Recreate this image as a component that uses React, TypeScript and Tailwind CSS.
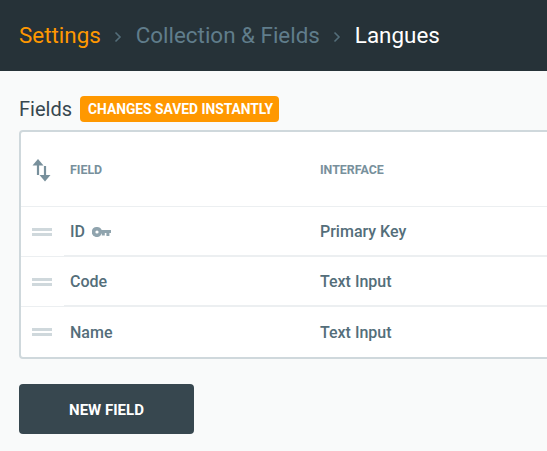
import type { FC } from 'react';

type Row = { name: string; iface: string; primary?: boolean };

const rows: Row[] = [
  { name: 'ID', iface: 'Primary Key', primary: true },
  { name: 'Code', iface: 'Text Input' },
  { name: 'Name', iface: 'Text Input' },
];

const Chevron: FC = () => (
  <svg width="8" height="12" viewBox="0 0 8 12" className="mx-[13.5px] mt-0.5 shrink-0" fill="none">
    <path d="M1.5 1.5 6 6l-4.500 4.500" stroke="#546e7a" strokeWidth="1.6" />
  </svg>
);

const KeyIcon: FC = () => (
  <svg width="19" height="10" viewBox="0 0 19 10" className="ml-[7px]" fill="#90a4ae">
    <path d="M5 0a5 5 0 0 1 4.700 3H19v3h-1.600v3h-3V6h-1.600v2.500h-3V6.500H9.600A5 5 0 1 1 5 0Zm0 3.400a1.600 1.600 0 1 0 0 3.200 1.600 1.600 0 0 0 0-3.200Z" />
  </svg>
);

const SortIcon: FC = () => (
  <svg width="19" height="24" viewBox="0 0 19 24" fill="none" stroke="#78909c" strokeWidth="2.200">
    <path d="M6 3v14" />
    <path d="M13 8v13" />
    <path d="M0.500 7.500 6 1l5.500 6.500Z" strokeWidth="0" fill="#78909c" />
    <path d="M7.500 17 13 23.500l5.500-6.500Z" strokeWidth="0" fill="#78909c" />
  </svg>
);

const Handle: FC = () => (
  <div className="flex w-[20px] flex-col gap-[2px]">
    <div className="h-[3px] bg-[#cfd8dc]" />
    <div className="h-[3px] bg-[#cfd8dc]" />
  </div>
);

export default function App() {
  return (
    <div className="h-[451px] w-[547px] overflow-hidden bg-[#f9fafa] font-['Roboto',sans-serif]">
      <header className="flex h-[71px] items-center bg-[#263238] pl-[19px] text-[22.4px]">
        <span className="text-[#ff9800]">Settings</span>
        <Chevron />
        <span className="text-[#607d8b]">Collection &amp; Fields</span>
        <Chevron />
        <span className="text-white">Langues</span>
      </header>

      <div className="flex items-center pl-[19px] pt-[25px]">
        <span className="text-[20px] leading-[26px] text-[#37474f]">Fields</span>
        <span className="ml-[8px] flex h-[26px] items-center rounded-[4px] bg-[#ff9800] pl-[8px] pr-[6px] text-[13.8px] font-bold text-white">
          CHANGES SAVED INSTANTLY
        </span>
      </div>

      <div className="ml-[19px] mt-[8px] h-[229px] w-[540px] rounded-[4px] border-2 border-[#cfd8dc] bg-white">
        <div className="flex h-[75px] items-center border-b border-[#eceff1] pt-[2px]">
          <div className="flex w-[43px] shrink-0 justify-center pr-[2px]">
            <SortIcon />
          </div>
          <div className="ml-[6px] w-[250px] text-[12.4px] font-bold text-[#78909c]">FIELD</div>
          <div className="text-[12.4px] font-bold text-[#78909c]">INTERFACE</div>
        </div>
        {rows.map((row, i) => (
          <div key={row.name} className="flex h-[50px]">
            <div className={i === rows.length - 1 ? 'flex w-[43px] shrink-0 items-center justify-center pr-[2px]' : 'flex w-[43px] shrink-0 items-center justify-center border-b border-[#eceff1] pr-[2px]'}>
              <Handle />
            </div>
            <div className={i === rows.length - 1 ? 'flex grow pl-[6px]' : 'flex grow border-b-2 border-[#eceff1] pl-[6px]'}>
              <div className="flex w-[250px] items-center pt-[2px] text-[16px] font-medium text-[#546e7a]">
                {row.name}
                {row.primary && <KeyIcon />}
              </div>
              <div className="flex items-center pt-[2px] text-[16px] font-medium text-[#546e7a]">{row.iface}</div>
            </div>
          </div>
        ))}
      </div>

      <button className="ml-[19px] mt-[25px] flex h-[50px] w-[175px] items-center justify-center rounded-[4px] bg-[#37474f] pt-[2px] text-[15px] font-bold text-white">
        NEW FIELD
      </button>
    </div>
  );
}
